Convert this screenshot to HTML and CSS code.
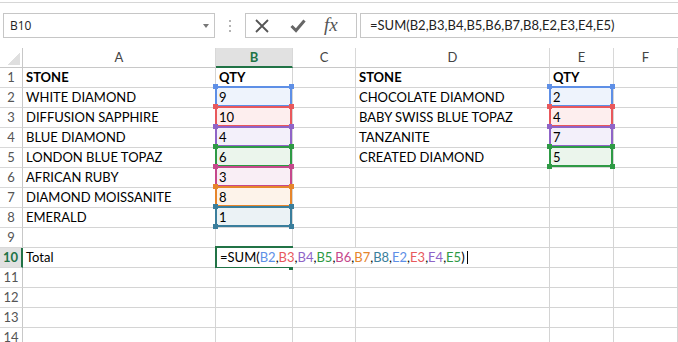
FILE: index.html
```html
<!DOCTYPE html>
<html>
<head>
<meta charset="utf-8">
<link rel="stylesheet" href="styles.css">
</head>
<body>
<div class="app">
  <div class="topline"></div>
  <div class="fbar">
    <div class="namebox"><span class="nb-text">B10</span><span class="nb-arrow"></span></div>
    <div class="grip"><i></i><i></i><i></i></div>
    <div class="fbtns">
      <svg class="ic-x" width="14" height="14" viewBox="0 0 14 14"><path d="M1 1 L13 13 M13 1 L1 13" stroke="#555" stroke-width="1.8" fill="none"/></svg>
      <svg class="ic-check" width="16" height="14" viewBox="0 0 16 14"><path d="M1.5 7 L6 11.5 L14.5 1.5" stroke="#666" stroke-width="3" fill="none"/></svg>
      <span class="fx">fx</span>
    </div>
    <div class="finput">=SUM(B2,B3,B4,B5,B6,B7,B8,E2,E3,E4,E5)</div>
  </div>
  <div class="sheet">
    <div class="corner"></div><div class="ch">A</div><div class="ch sel">B</div><div class="ch">C</div><div class="ch">D</div><div class="ch">E</div><div class="ch">F</div>

    <div class="rh">1</div><div class="c bold">STONE</div><div class="c bold">QTY</div><div class="c"></div><div class="c bold">STONE</div><div class="c bold">QTY</div><div class="c"></div>
    <div class="rh">2</div><div class="c">WHITE DIAMOND</div><div class="c rg blue">9</div><div class="c"></div><div class="c">CHOCOLATE DIAMOND</div><div class="c rg blue">2</div><div class="c"></div>
    <div class="rh">3</div><div class="c">DIFFUSION SAPPHIRE</div><div class="c rg red">10</div><div class="c"></div><div class="c">BABY SWISS BLUE TOPAZ</div><div class="c rg red">4</div><div class="c"></div>
    <div class="rh">4</div><div class="c">BLUE DIAMOND</div><div class="c rg purple">4</div><div class="c"></div><div class="c">TANZANITE</div><div class="c rg purple">7</div><div class="c"></div>
    <div class="rh">5</div><div class="c">LONDON BLUE TOPAZ</div><div class="c rg green">6</div><div class="c"></div><div class="c">CREATED DIAMOND</div><div class="c rg green">5</div><div class="c"></div>
    <div class="rh">6</div><div class="c">AFRICAN RUBY</div><div class="c rg pink">3</div><div class="c"></div><div class="c"></div><div class="c"></div><div class="c"></div>
    <div class="rh">7</div><div class="c">DIAMOND MOISSANITE</div><div class="c rg orange">8</div><div class="c"></div><div class="c"></div><div class="c"></div><div class="c"></div>
    <div class="rh">8</div><div class="c">EMERALD</div><div class="c rg teal">1</div><div class="c"></div><div class="c"></div><div class="c"></div><div class="c"></div>
    <div class="rh">9</div><div class="c"></div><div class="c"></div><div class="c"></div><div class="c"></div><div class="c"></div><div class="c"></div>
    <div class="rh sel">10</div><div class="c">Total</div><div class="c edit"><div class="editor">=SUM(<span class="tx blue">B2</span>,<span class="tx red">B3</span>,<span class="tx purple">B4</span>,<span class="tx green">B5</span>,<span class="tx pink">B6</span>,<span class="tx orange">B7</span>,<span class="tx teal">B8</span>,<span class="tx blue">E2</span>,<span class="tx red">E3</span>,<span class="tx purple">E4</span>,<span class="tx green">E5</span>)<span class="caret"></span></div></div><div class="c"></div><div class="c"></div><div class="c"></div><div class="c"></div>
    <div class="rh">11</div><div class="c"></div><div class="c"></div><div class="c"></div><div class="c"></div><div class="c"></div><div class="c"></div>
    <div class="rh">12</div><div class="c"></div><div class="c"></div><div class="c"></div><div class="c"></div><div class="c"></div><div class="c"></div>
    <div class="rh">13</div><div class="c"></div><div class="c"></div><div class="c"></div><div class="c"></div><div class="c"></div><div class="c"></div>
    <div class="rh">14</div><div class="c"></div><div class="c"></div><div class="c"></div><div class="c"></div><div class="c"></div><div class="c"></div>
  </div>
</div>
</body>
</html>
```

FILE: styles.css
```css
html, body {
  margin: 0;
  padding: 0;
  background: #fff;
  overflow: hidden;
}
.app {
  width: 678px;
  height: 342px;
  overflow: hidden;
  font-family: Lato, "Liberation Sans", sans-serif;
  font-size: 13px;
  color: #000;
}
.topline {
  height: 2px;
  border-bottom: 1px solid #d6d6d6;
}
.fbar {
  display: flex;
  align-items: center;
  height: 45px;
  box-sizing: border-box;
  padding: 10px 0;
}
.namebox {
  box-sizing: border-box;
  width: 212px;
  height: 25px;
  margin-left: 3px;
  border: 1px solid #c6c6c6;
  display: flex;
  align-items: center;
  justify-content: space-between;
  padding: 0 5px 0 6px;
}
.nb-text {
  font-family: "Open Sans", sans-serif;
  font-size: 12px;
  color: #222;
}
.nb-arrow {
  width: 0;
  height: 0;
  border-left: 3.5px solid transparent;
  border-right: 3.5px solid transparent;
  border-top: 4px solid #777;
}
.grip {
  width: 30px;
  display: flex;
  flex-direction: column;
  align-items: center;
  gap: 3px;
}
.grip i {
  display: block;
  width: 2px;
  height: 2px;
  background: #b4b4b4;
}
.fbtns {
  box-sizing: border-box;
  width: 112px;
  height: 25px;
  border: 1px solid #c6c6c6;
  display: flex;
  align-items: center;
  padding-left: 9px;
}
.ic-x { display: block; }
.ic-check { display: block; margin-left: 21px; }
.fx {
  margin-left: 18px;
  font-family: "Liberation Serif", serif;
  font-style: italic;
  font-size: 19px;
  color: #555;
  line-height: 20px;
  margin-top: -2px;
}
.finput {
  box-sizing: border-box;
  flex: 1;
  height: 25px;
  margin-left: 3px;
  border: 1px solid #c6c6c6;
  border-right: none;
  padding-left: 9px;
  line-height: 22px;
  color: #222;
  white-space: nowrap;
}
.sheet {
  display: grid;
  grid-template-columns: 23px 193px 77px 63px 194px 64px minmax(0, 1fr);
  grid-auto-rows: 20px;
}
.sheet > div {
  box-sizing: border-box;
  border-right: 1px solid #d4d4d4;
  border-bottom: 1px solid #d4d4d4;
  white-space: nowrap;
  line-height: 19px;
}
.corner {
  border-color: #c8c8c8 !important;
  background: linear-gradient(135deg, transparent 50%, #dfdfdf 50%) no-repeat right 2px bottom 2px / 12px 12px;
}
.ch {
  text-align: center;
  color: #444;
  border-bottom-color: #c8c8c8 !important;
  border-right-color: #d8d8d8 !important;
}
.ch.sel {
  background: #e1e1e1;
  color: #217346;
  font-weight: bold;
  border-bottom: 2px solid #217346 !important;
  line-height: 18px !important;
}
.rh {
  text-align: center;
  color: #555;
  border-right-color: #c8c8c8 !important;
  border-bottom-color: #d8d8d8 !important;
}
.rh.sel {
  background: #e1e1e1;
  color: #217346;
  font-weight: bold;
  border-right: 2px solid #217346 !important;
}
.c {
  padding-left: 3px;
}
.bold { font-weight: bold; }

.blue   { --c: #5e8fe6; --f: #eef3fc; }
.red    { --c: #e8585c; --f: #fdeeee; }
.purple { --c: #8f64c7; --f: #f3f0fa; }
.green  { --c: #2e9a45; --f: #ebf5ec; }
.pink   { --c: #c5488c; --f: #f9eef5; }
.orange { --c: #e6852b; --f: #fdf3ea; }
.teal   { --c: #3a7e9c; --f: #ebf2f5; }

.rg {
  position: relative;
  background: var(--f);
}
.rg::before {
  content: "";
  position: absolute;
  left: -1px;
  right: 0;
  top: -2px;
  bottom: 0;
  border: 2px solid var(--c);
}
.rg::after {
  content: "";
  position: absolute;
  left: -3px;
  right: -2px;
  top: -4px;
  bottom: -2px;
  background:
    linear-gradient(var(--c), var(--c)) left top / 5px 5px no-repeat,
    linear-gradient(var(--c), var(--c)) right top / 5px 5px no-repeat,
    linear-gradient(var(--c), var(--c)) left bottom / 5px 5px no-repeat,
    linear-gradient(var(--c), var(--c)) right bottom / 5px 5px no-repeat;
}
.tx { color: var(--c); }

.edit {
  position: relative;
}
.edit::before {
  content: "";
  position: absolute;
  left: -1px;
  right: -1px;
  top: -2px;
  bottom: -1px;
  border: 2px solid #217346;
  z-index: 1;
}
.edit::after {
  content: "";
  position: absolute;
  right: -1px;
  bottom: -3px;
  width: 4px;
  height: 4px;
  background: #217346;
  z-index: 1;
}
.editor {
  position: absolute;
  left: 1px;
  top: 0;
  height: 19px;
  line-height: 19px;
  padding: 0 2px 0 3px;
  background: #fff;
  z-index: 2;
  white-space: nowrap;
}
.caret {
  display: inline-block;
  width: 1px;
  height: 13px;
  background: #000;
  margin-left: 2px;
  vertical-align: -2px;
}
```
